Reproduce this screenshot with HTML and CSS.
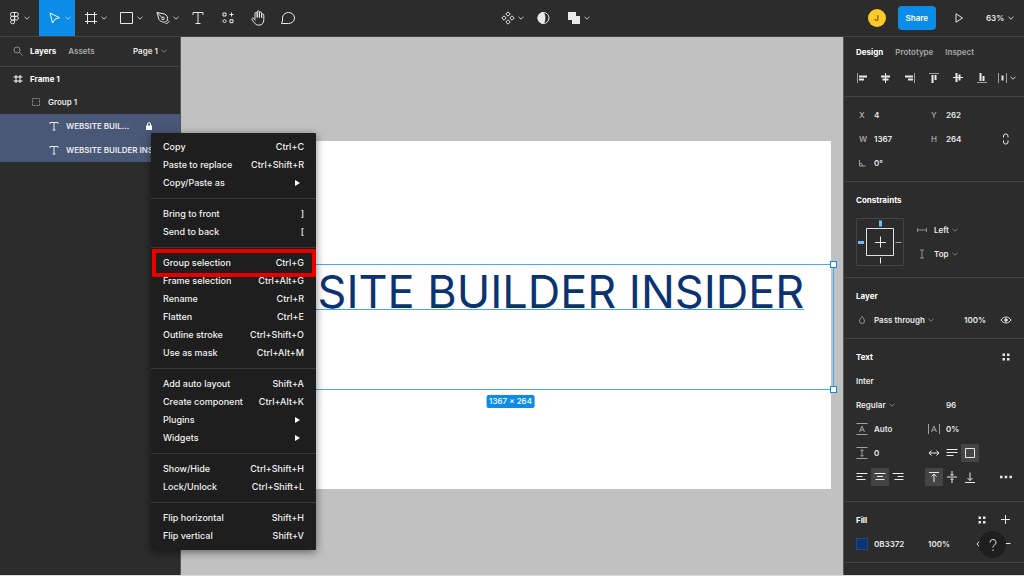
FILE: index.html
```html
<!DOCTYPE html>
<html lang="en">
<head>
<meta charset="utf-8">
<title>Frame 1 – Design editor</title>
<link rel="stylesheet" href="styles.css">
</head>
<body>
<svg class="sprite" aria-hidden="true">
  <symbol id="chev" viewBox="0 0 8 8"><path d="M1.500 2.800L4 5.200 6.500 2.800"/></symbol>
  <symbol id="type" viewBox="0 0 18 18"><path d="M4 6V3.500h10V6M9 3.500v11M6.500 14.500h5"/></symbol>
  <symbol id="type-small" viewBox="0 0 12 12"><path d="M2 4V2.500h8V4M6 2.500v7.500M4.500 10h3"/></symbol>
  <symbol id="dots" viewBox="0 0 12 12"><path class="solid" d="M2.500 2.500h2.500V5H2.500zM7 2.500h2.500V5H7zM2.500 7h2.500v2.500H2.500zM7 7h2.500v2.500H7z"/></symbol>
  <symbol id="hash" viewBox="0 0 18 18"><path d="M5.500 3v12M12.500 3v12M3 5.500h12M3 12.500h12"/></symbol>
  <symbol id="hash-small" viewBox="0 0 12 12"><path d="M4 2v8M8 2v8M1.500 4h9M1.500 8h9"/></symbol>
</svg>
<div class="app">
  <header class="toolbar">
    <div class="tools">
      <button class="tool tool-menu" aria-label="Main menu"><svg class="icon" viewBox="0 0 18 18"><path d="M9.500 3.500H7.300a1.900 1.900 0 0 0 0 3.800h2.200zM9.500 3.500h2a1.900 1.900 0 0 1 0 3.800h-2zM9.500 7.300H7.300a1.900 1.900 0 0 0 0 3.800h2.200zM9.500 11.100H7.300a1.900 1.900 0 1 0 2.200 1.900zM9.500 9.200a1.900 1.900 0 1 1 3.800 0 1.900 1.900 0 1 1-3.800 0z"/></svg><svg class="chev"><use href="#chev"/></svg></button>
      <button class="tool active" aria-label="Move"><svg class="icon" viewBox="0 0 18 18"><path d="M5 4l9.500 4.700-4.300 1.300L7.500 14z"/></svg><svg class="chev"><use href="#chev"/></svg></button>
      <button class="tool" aria-label="Frame"><svg class="icon"><use href="#hash"/></svg><svg class="chev"><use href="#chev"/></svg></button>
      <button class="tool" aria-label="Rectangle"><svg class="icon" viewBox="0 0 18 18"><path d="M2.500 3.500h12v11h-12z"/></svg><svg class="chev"><use href="#chev"/></svg></button>
      <button class="tool" aria-label="Pen"><svg class="icon" viewBox="0 0 18 18"><path d="M3 3.500l7.500 1.500c2.500 1 3.500 3.500 3 6L11.500 13c-2.500.500-5-.300-6.500-2.500zM3 3.500l5 5M14 11.500l1 1-2.500 2.500-1-1"/><circle cx="9" cy="9.300" r="1.300"/></svg><svg class="chev"><use href="#chev"/></svg></button>
      <button class="tool single" aria-label="Text"><svg class="icon"><use href="#type"/></svg></button>
      <button class="tool single" aria-label="Resources"><svg class="icon" viewBox="0 0 18 18"><path d="M4 4h3v3H4zM12.500 3.500v4M10.500 5.500h4M5.500 10.200l1.900 1.900-1.900 1.900-1.900-1.900zM11 10.700h3v3h-3z"/></svg></button>
      <button class="tool single" aria-label="Hand"><svg class="icon" viewBox="0 0 18 18"><path d="M6 10V4.500a1.100 1.100 0 0 1 2.200 0V8.500 3a1.100 1.100 0 0 1 2.200 0v5.500V4a1.100 1.100 0 0 1 2.200 0V9V6a1.100 1.100 0 0 1 2.200 0V10.500c0 3.500-1.800 5.700-4.800 5.700-3.500 0-4.500-2.200-7-5.500-.800-1.200.800-2.200 1.800-1.200L6.500 11.500"/></svg></button>
      <button class="tool single" aria-label="Comment"><svg class="icon" viewBox="0 0 18 18"><path d="M2.500 14.500l1-2.500V9a6 5.500 0 1 1 6 5.500z"/></svg></button>
    </div>
    <div class="tools tools-center">
      <button class="tool" aria-label="Component"><svg class="icon" viewBox="0 0 18 18"><path d="M9 2.800l2.200 2.200L9 7.200 6.800 5zM9 10.800l2.200 2.200L9 15.200 6.800 13zM5 6.800L7.200 9 5 11.200 2.800 9zM13 6.800L15.200 9 13 11.200 10.800 9z"/></svg><svg class="chev"><use href="#chev"/></svg></button>
      <button class="tool single" aria-label="Use as mask"><svg class="icon" viewBox="0 0 18 18"><circle cx="9.500" cy="9" r="5.500"/><path class="solid" d="M9.500 3a6 6 0 0 0 0 12c2.500-3 2.500-9 0-12z"/></svg></button>
      <button class="tool" aria-label="Union selection"><svg class="icon" viewBox="0 0 18 18"><path class="solid" d="M3 3h8v4h4v8H7v-4H3z"/></svg><svg class="chev"><use href="#chev"/></svg></button>
    </div>
    <div class="session">
      <span class="avatar">J</span>
      <button class="share">Share</button>
      <button class="present" aria-label="Present"><svg class="icon" viewBox="0 0 18 18"><path d="M6 4.800v8.400L12.500 9z"/></svg></button>
      <label class="pick"><select aria-label="Zoom"><option>63%</option></select><svg class="chev bright"><use href="#chev"/></svg></label>
    </div>
  </header>

  <div class="workspace">
    <aside class="layers">
      <div class="layers-head">
        <svg class="search" viewBox="0 0 12 12"><circle cx="5" cy="5" r="3"/><path d="M7.300 7.300L10.500 10.500"/></svg>
        <button class="tab current">Layers</button>
        <button class="tab">Assets</button>
        <label class="pick page"><select aria-label="Page"><option>Page 1</option></select><svg class="chev"><use href="#chev"/></svg></label>
      </div>
      <ul class="tree">
        <li><button class="layer top-level"><svg class="small"><use href="#hash-small"/></svg>Frame 1</button></li>
        <li><button class="layer level-1"><svg class="small dim" viewBox="0 0 12 12"><path stroke-dasharray="2 1" d="M2.500 2.500h7v7h-7z"/></svg>Group 1</button></li>
        <li><button class="layer level-2 selected"><svg class="small"><use href="#type-small"/></svg><span class="layer-name">WEBSITE BUIL...</span><svg class="lock" viewBox="0 0 8 8"><path class="solid" d="M1 3.500h6V8H1z"/><path d="M2.500 4V2.200a1.500 1.500 0 0 1 3 0V4"/></svg></button></li>
        <li><button class="layer level-2 selected"><svg class="small"><use href="#type-small"/></svg><span class="layer-name">WEBSITE BUILDER INSIDER</span></button></li>
      </ul>
    </aside>

    <main class="canvas">
      <span class="frame-label">Frame 1</span>
      <div class="frame"></div>
      <div class="selection">
        <p class="headline"><span>WEBSITE BUILDER INSIDER</span></p>
        <i class="handle ne"></i><i class="handle se"></i>
        <span class="size-chip">1367 × 264</span>
      </div>
    </main>

    <aside class="inspector">
      <nav class="inspector-tabs">
        <button class="tab current">Design</button><button class="tab">Prototype</button><button class="tab">Inspect</button>
      </nav>
      <div class="align-row">
        <button aria-label="Align left"><svg class="small" viewBox="0 0 12 12"><path class="faint" d="M1.500 1v10"/><path class="bold" d="M3 4.500h8M3 7.500h5"/></svg></button>
        <button aria-label="Align horizontal centers"><svg class="small" viewBox="0 0 12 12"><path d="M5.500 1v10"/><path class="bold" d="M1 4.500h9M2.500 7.500h6"/></svg></button>
        <button aria-label="Align right"><svg class="small" viewBox="0 0 12 12"><path class="faint" d="M10.500 1v10"/><path class="bold" d="M1 4.500h8M4 7.500h5"/></svg></button>
        <button aria-label="Align top"><svg class="small" viewBox="0 0 12 12"><path class="faint" d="M1 1.500h10"/><path class="bold" d="M4.500 3v8M7.500 3v5"/></svg></button>
        <button aria-label="Align vertical centers"><svg class="small" viewBox="0 0 12 12"><path d="M1 5.500h10"/><path class="bold" d="M4.500 1v9M7.500 2.500v6"/></svg></button>
        <button aria-label="Align bottom"><svg class="small" viewBox="0 0 12 12"><path class="faint" d="M1 10.500h10"/><path class="bold" d="M4.500 1v8M7.500 4v5"/></svg></button>
        <button class="distribute" aria-label="Distribute"><svg class="small" viewBox="0 0 12 12"><path class="faint" d="M1.500 1v10M9.500 1v10"/><path class="bold" d="M5.500 3.500v5"/></svg><svg class="chev bright"><use href="#chev"/></svg></button>
      </div>

      <section class="section">
        <div class="fields">
          <label for="x">X</label><input id="x" value="4">
          <label for="y">Y</label><input id="y" value="262">
        </div>
        <div class="fields">
          <label for="w">W</label><input id="w" value="1367">
          <label for="h">H</label><input id="h" value="264">
          <button aria-label="Constrain proportions"><svg class="small" viewBox="0 0 12 12"><path d="M3.500 4.500V3a2 2 0 0 1 2-2h.500a2 2 0 0 1 2 2v1.500M3.500 7.500V9a2 2 0 0 0 2 2h.500a2 2 0 0 0 2-2V7.500"/></svg></button>
        </div>
        <div class="fields">
          <label for="rot" aria-label="Rotation"><svg class="small" viewBox="0 0 12 12"><path d="M3.500 3v6h6M3.500 6A3 3 0 0 1 6.500 9"/></svg></label><input id="rot" value="0°">
        </div>
      </section>

      <section class="section section-constraints">
        <h2>Constraints</h2>
        <div class="constraints">
          <svg class="constraint-box" viewBox="0 0 48 48" role="img" aria-label="Left and top"><path class="edge" d="M.500.500h47v47H.500z"/><path class="inner" d="M10.500 10.500h27v27h-27z"/><path d="M24.500 18.500v11M19 24.500h11M24.500 39.500v6"/><path class="faint" d="M39.500 24.500h6"/><path class="pin" d="M24.500 2.500v6M2 24.500h6"/></svg>
          <div class="constraint-picks">
            <label class="pick"><svg class="small dim" viewBox="0 0 12 12"><path d="M1.500 4v4M10.500 4v4M1.500 6h9"/></svg><select aria-label="Horizontal constraint"><option>Left</option></select><svg class="chev"><use href="#chev"/></svg></label>
            <label class="pick"><svg class="small dim" viewBox="0 0 12 12"><path d="M4 2h4M4 10h4M6 2v8"/></svg><select aria-label="Vertical constraint"><option>Top</option></select><svg class="chev"><use href="#chev"/></svg></label>
          </div>
        </div>
      </section>

      <section class="section">
        <h2>Layer</h2>
        <div class="layer-row">
          <label class="pick blend"><svg class="small dim" viewBox="0 0 12 12"><path d="M6 2.500C4.500 4.500 3.500 5.500 3.500 7a2.500 2.500 0 0 0 5 0C8.500 5.500 7.500 4.500 6 2.500z"/></svg><select aria-label="Blend mode"><option>Pass through</option></select><svg class="chev"><use href="#chev"/></svg></label>
          <input class="opacity" aria-label="Layer opacity" value="100%">
          <button aria-label="Toggle visibility"><svg class="small" viewBox="0 0 12 12"><path d="M1 6c2.500-4 7.500-4 10 0-2.500 4-7.500 4-10 0z"/><circle class="solid" cx="6" cy="6" r="1.700"/></svg></button>
        </div>
      </section>

      <section class="section section-text">
        <div class="title-row"><h2>Text</h2><button aria-label="Text styles"><svg class="small"><use href="#dots"/></svg></button></div>
        <input class="family" aria-label="Font family" value="Inter">
        <div class="fields">
          <label class="pick weight"><select aria-label="Font weight"><option>Regular</option></select><svg class="chev"><use href="#chev"/></svg></label>
          <input class="font-size" aria-label="Font size" value="96">
        </div>
        <div class="fields">
          <label for="lh" aria-label="Line height"><svg class="small faint" viewBox="0 0 12 12"><path d="M.500 .500h11M.500 11.500h11M3.500 9L6 3l2.500 6M4.500 7h3"/></svg></label><input id="lh" value="Auto">
          <label for="ls" aria-label="Letter spacing"><svg class="small faint" viewBox="0 0 12 12"><path d="M.500 1v10M11.500 1v10M3.500 9L6 3l2.500 6M4.500 7h3"/></svg></label><input id="ls" value="0%">
        </div>
        <div class="fields">
          <label for="ps" aria-label="Paragraph spacing"><svg class="small faint" viewBox="0 0 12 12"><path d="M.500 .500h11M.500 11.500h11M6 2.500v7M4.500 4L6 2.500 7.500 4M4.500 8L6 9.500 7.500 8"/></svg></label><input id="ps" value="0">
          <div class="toggles toggles-right">
            <button aria-label="Auto width"><svg class="small" viewBox="0 0 12 12"><path d="M1 6h10M3.500 3.500L1 6l2.500 2.500M8.500 3.500L11 6 8.500 8.500"/></svg></button>
            <button aria-label="Auto height"><svg class="small" viewBox="0 0 12 12"><path d="M.500 2.500h11M.500 5.500h11M.500 8.500h7"/></svg></button>
            <button class="on" aria-label="Fixed size"><svg class="small" viewBox="0 0 12 12"><path d="M1.500 1.500h9v9h-9z"/></svg></button>
          </div>
        </div>
        <div class="align-text">
          <div class="toggles">
            <button aria-label="Text left"><svg class="small" viewBox="0 0 12 12"><path d="M.500 2.500h11M.500 5.500h6M.500 8.500h9"/></svg></button>
            <button class="on" aria-label="Text center"><svg class="small" viewBox="0 0 12 12"><path d="M.500 2.500h11M3 5.500h6M1.500 8.500h9"/></svg></button>
            <button aria-label="Text right"><svg class="small" viewBox="0 0 12 12"><path d="M.500 2.500h11M5.500 5.500h6M2.500 8.500h9"/></svg></button>
          </div>
          <div class="toggles toggles-right">
            <button class="on" aria-label="Top"><svg class="small" viewBox="0 0 12 12"><path d="M1 1.500h10M6 3v8M3.500 5.500L6 3l2.500 2.500"/></svg></button>
            <button aria-label="Middle"><svg class="small" viewBox="0 0 12 12"><path d="M1 6h10M6 0v4.500M4.500 3L6 4.500 7.500 3M6 12V7.500M4.500 9L6 7.500 7.500 9"/></svg></button>
            <button aria-label="Bottom"><svg class="small" viewBox="0 0 12 12"><path d="M1 11.500h10M6 1.500V9.500M3.500 7L6 9.500 8.500 7"/></svg></button>
          </div>
          <button aria-label="More type options"><svg class="small" viewBox="0 0 12 12"><path class="solid" d="M0 4.700h2.500v2.500H0zM4.700 4.700h2.500v2.500H4.700zM9.500 4.700H12v2.500H9.500z"/></svg></button>
        </div>
      </section>

      <section class="section">
        <div class="title-row"><h2>Fill</h2><button aria-label="Fill styles"><svg class="small"><use href="#dots"/></svg></button><button aria-label="Add fill"><svg class="small" viewBox="0 0 12 12"><path d="M5.500 1v9M1 5.500h9"/></svg></button></div>
        <div class="fields fill-row">
          <span class="swatch"></span><input aria-label="Fill color" value="0B3372">
          <input class="fill-opacity" aria-label="Fill opacity" value="100%">
          <button aria-label="Hide fill"><svg class="small" viewBox="0 0 12 12"><path d="M1 6c2.500-4 7.500-4 10 0-2.500 4-7.500 4-10 0z"/></svg></button>
          <button aria-label="Remove fill"><svg class="small" viewBox="0 0 12 12"><path d="M1.500 5.500h9"/></svg></button>
        </div>
      </section>
      <button class="help" aria-label="Help"><svg class="icon" viewBox="0 0 18 18"><path d="M6 6.500a3 3 0 1 1 4.200 2.700C9.300 9.700 9 10.200 9 11.500M9 13.500V15"/></svg></button>
    </aside>
  </div>

  <div class="menu" role="menu">
    <div class="menu-group">
      <button role="menuitem">Copy<kbd>Ctrl+C</kbd></button>
      <button role="menuitem">Paste to replace<kbd>Ctrl+Shift+R</kbd></button>
      <button role="menuitem">Copy/Paste as<i class="arrow"></i></button>
    </div>
    <div class="menu-group">
      <button role="menuitem">Bring to front<kbd>]</kbd></button>
      <button role="menuitem">Send to back<kbd>[</kbd></button>
    </div>
    <div class="menu-group">
      <button role="menuitem" class="marked">Group selection<kbd>Ctrl+G</kbd></button>
      <button role="menuitem">Frame selection<kbd>Ctrl+Alt+G</kbd></button>
      <button role="menuitem">Rename<kbd>Ctrl+R</kbd></button>
      <button role="menuitem">Flatten<kbd>Ctrl+E</kbd></button>
      <button role="menuitem">Outline stroke<kbd>Ctrl+Shift+O</kbd></button>
      <button role="menuitem">Use as mask<kbd>Ctrl+Alt+M</kbd></button>
    </div>
    <div class="menu-group">
      <button role="menuitem">Add auto layout<kbd>Shift+A</kbd></button>
      <button role="menuitem">Create component<kbd>Ctrl+Alt+K</kbd></button>
      <button role="menuitem">Plugins<i class="arrow"></i></button>
      <button role="menuitem">Widgets<i class="arrow"></i></button>
    </div>
    <div class="menu-group">
      <button role="menuitem">Show/Hide<kbd>Ctrl+Shift+H</kbd></button>
      <button role="menuitem">Lock/Unlock<kbd>Ctrl+Shift+L</kbd></button>
    </div>
    <div class="menu-group">
      <button role="menuitem">Flip horizontal<kbd>Shift+H</kbd></button>
      <button role="menuitem">Flip vertical<kbd>Shift+V</kbd></button>
    </div>
  </div>
</div>
</body>
</html>
```
FILE: styles.css
```css
* { box-sizing: border-box; }
body {
  margin: 0;
  font: 600 8px/12px Inter, "Liberation Sans", sans-serif;
  color: #e8e8e8;
  background: #2c2c2c;
}
button, input, select {
  font: inherit;
  color: inherit;
  background: none;
  border: 0;
  padding: 0;
  margin: 0;
  min-width: 0;
}
button { display: flex; align-items: center; }
select { appearance: none; }
input { width: 100%; }
h2 { margin: 0; font-size: 8px; font-weight: 700; line-height: 24px; color: #fff; }
svg { fill: none; stroke: currentColor; flex: none; display: block; }
.sprite { position: absolute; width: 0; height: 0; }
.icon { width: 18px; height: 18px; }
.small { width: 12px; height: 12px; }
.chev { width: 8px; height: 8px; color: #808080; }
.chev.bright { color: #d0d0d0; }
.dim { color: #8f8f8f; }
.faint { color: #a0a0a0; stroke: #a0a0a0; }
.solid { fill: currentColor; stroke: none; }
.bold { stroke-width: 2; }

.app {
  position: relative;
  display: flex;
  flex-direction: column;
  height: 100vh;
  overflow: hidden;
  border-bottom: 1px solid #dcdcdc;
}

.toolbar {
  display: grid;
  grid-template-columns: 1fr auto 1fr;
  flex: none;
  height: 37px;
  border-bottom: 1px solid #444;
}
.tools { display: flex; }
.tools-center { padding-left: 62px; }
.tool { width: 36px; height: 36px; padding-left: 7px; }
.tool .chev { color: #c4c4c4; }
.tool-menu { width: 39px; padding-left: 5px; }
.tool.single { width: 30px; padding-left: 6px; }
.tool.active { background: #0c8ce9; color: #fff; }
.tool.active .icon { margin-left: -1px; margin-right: 1px; }
.session { display: flex; align-items: center; justify-content: flex-end; padding-right: 9px; }
.avatar {
  width: 18px;
  height: 18px;
  margin-right: 12px;
  border-radius: 50%;
  background: #ffc927;
  color: #6b5300;
  line-height: 18px;
  text-align: center;
}
.share {
  height: 24px;
  padding: 0 8px;
  margin-right: 14px;
  border-radius: 4px;
  background: #0c8ce9;
  color: #fff;
}
.present { margin-right: 18px; }
.pick { display: flex; align-items: center; }
.pick .small { margin-right: 6px; }
.pick .chev { margin-left: 2px; }

.workspace { display: flex; flex: 1; min-height: 0; }
.layers { flex: none; width: 181px; border-right: 1px solid #555; }
.layers-head {
  display: flex;
  align-items: center;
  height: 30px;
  padding: 0 12px 1px;
  border-bottom: 1px solid #444;
}
.search { width: 12px; height: 12px; margin-right: 6px; color: #8a8a8a; }
.tab { color: #a8a8a8; margin-right: 12px; }
.tab.current { color: #fff; font-weight: 700; }
.page { margin-left: auto; }
.tree { list-style: none; margin: -1px 0 0; padding: 0; }
.layer { width: 100%; height: 24px; gap: 6px; padding: 0 12px; text-align: left; }
.top-level { font-weight: 700; color: #fff; }
.level-1 { padding-left: 30px; }
.level-2 { padding-left: 48px; }
.selected { background: #4a5878; }
.tree li:first-child { border-top: 1px solid #444; margin-bottom: -1px; }
.layer-name { white-space: nowrap; overflow: hidden; }
.lock { width: 8px; height: 8px; margin-left: auto; margin-right: 15px; color: #fff; }

.canvas { position: relative; flex: 1; overflow: hidden; background: #c1c1c1; }
.frame-label { position: absolute; left: 7px; top: 93px; color: #333; font-weight: 400; }
.frame { position: absolute; left: 5px; top: 104px; width: 645px; height: 348px; background: #fff; }
.selection {
  position: absolute;
  left: 6px;
  top: 227px;
  width: 647px;
  height: 126px;
  border: 1px solid #4aa8ee;
}
.headline {
  margin: 0;
  color: #0b3372;
  font-size: 45px;
  font-weight: 400;
  line-height: 54px;
  text-align: center;
  white-space: nowrap;
}
.headline span {
  text-decoration: underline #4aa8ee 1px;
  text-underline-offset: 1px;
  text-decoration-skip-ink: none;
}
.handle { position: absolute; right: -4px; width: 7px; height: 7px; background: #fff; border: 1px solid #0c8ce9; }
.handle.ne { top: -4px; }
.handle.se { bottom: -4px; }
.size-chip {
  position: absolute;
  top: 130px;
  left: 50%;
  transform: translateX(-50%);
  padding: 0 3px;
  border-radius: 2px;
  background: #0c8ce9;
  color: #fff;
  font-weight: 500;
  line-height: 13px;
  white-space: nowrap;
}

.inspector { position: relative; flex: none; width: 181px; border-left: 1px solid #555; }
.inspector-tabs { display: flex; align-items: center; height: 29px; padding: 0 12px; }
.align-row {
  display: flex;
  align-items: center;
  gap: 12px;
  height: 31px;
  padding: 0 0 6px 12px;
  border-bottom: 1px solid #444;
}
.distribute { margin-left: -3px; }
.section { padding: 6px 12px; border-bottom: 1px solid #444; }
.fields {
  display: grid;
  grid-template-columns: 18px 54px 18px 1fr 12px;
  align-items: center;
  height: 24px;
}
.fields label { color: #a0a0a0; }
.fields label:not(.pick) { padding-left: 3px; }
.fields label:has(svg):not(.pick) { padding-left: 0; }
.section-constraints { padding-bottom: 11px; }
.constraints { display: flex; gap: 12px; padding-top: 6px; }
.constraint-box { width: 48px; height: 48px; }
.constraint-box .edge { stroke: #444; }
.constraint-box .inner { stroke: #e0e0e0; }
.constraint-box .pin { stroke: #6bbcff; stroke-width: 3; }
.constraint-picks .pick { height: 24px; }
.layer-row { display: flex; align-items: center; height: 24px; }
.blend { flex: 1; }
.opacity { width: 36px; }
.section-text { padding-bottom: 12px; }
.title-row { display: flex; gap: 12px; height: 24px; }
.title-row h2 { flex: 1; }
.family { display: block; height: 24px; }
.fields .weight { grid-column: 1 / 4; color: #e8e8e8; }
.font-size { grid-column: 4; }
.toggles { display: flex; margin-left: -3px; }
.fields .toggles-right { grid-column: 3 / 6; }
.toggles button { justify-content: center; width: 18px; height: 18px; border-radius: 1px; }
.toggles .on { background: #454545; }
.align-text { display: grid; grid-template-columns: 72px 1fr 12px; align-items: center; height: 24px; }
.fields.fill-row { grid-template-columns: 18px 54px 1fr 24px 12px; }
.swatch { width: 12px; height: 12px; background: #0b3372; border: 1px solid #24497f; }
.help {
  position: absolute;
  left: 135px;
  bottom: 17px;
  justify-content: center;
  width: 27px;
  height: 27px;
  border-radius: 50%;
  background: #1e1e1e;
}

.menu {
  position: absolute;
  left: 151px;
  top: 133px;
  width: 165px;
  padding: 5px 0;
  border-radius: 1px;
  background: #1e1e1e;
  color: #f0f0f0;
  font-size: 9px;
  font-weight: 500;
  box-shadow: 0 2px 8px rgba(0, 0, 0, .5);
}
.menu-group + .menu-group { margin-top: 6px; padding-top: 6px; border-top: 1px solid #3a3a3a; }
.menu button {
  position: relative;
  justify-content: space-between;
  width: 100%;
  height: 18px;
  padding: 0 12px;
}
.menu kbd { font: inherit; }
.arrow {
  margin-right: 4px;
  border: 3px solid transparent;
  border-left: 5px solid #fff;
  border-right: 0;
}
.marked::after {
  content: "";
  position: absolute;
  z-index: 1;
  inset: -5px 0 -5px 1px;
  border: 4px solid #e60000;
  border-radius: 1px;
}
```
